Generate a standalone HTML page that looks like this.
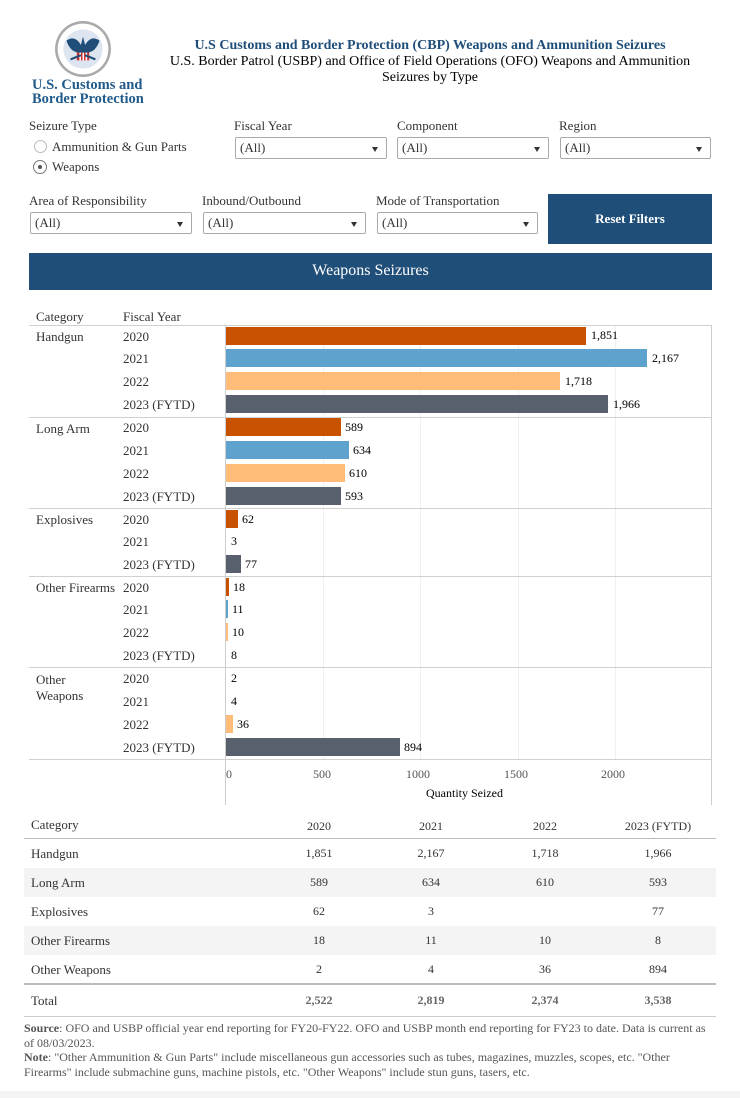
<!DOCTYPE html>
<html><head><meta charset="utf-8"><style>
*{margin:0;padding:0;box-sizing:border-box}
body{width:740px;height:1098px;background:#fff;font-family:"Liberation Serif",serif;color:#333;position:relative;overflow:hidden;font-size:12px}
.a{position:absolute;white-space:nowrap}
.sel{position:absolute;height:22px;border:1px solid #aaa;border-radius:2px;font-size:13px;padding:2px 4px;color:#333}
.sel:after{content:"";position:absolute;right:8px;top:9px;border-left:3.5px solid transparent;border-right:3.5px solid transparent;border-top:5px solid #333}
.lbl{font-size:13px;color:#333}
.bar{position:absolute;height:18px}
.o{background:#c85200}.b{background:#5fa2ce}.p{background:#ffbc79}.g{background:#57606c}
.v{position:absolute;font-size:12px;color:#000}
.t{font-size:12px;color:#555}
.hl{position:absolute;height:1px;background:#d0d0d0}
.c{position:absolute;width:80px;text-align:center;font-size:12px;color:#333}
</style></head><body>
<!-- logo -->
<svg class="a" style="left:54px;top:20px" width="58" height="58" viewBox="0 0 56 56">
<circle cx="28" cy="28" r="27" fill="#aaa"/><circle cx="28" cy="28" r="24.5" fill="#fff"/><circle cx="28" cy="28" r="19" fill="#dde6f0"/>
<path d="M12 20 Q20 14 26 24 L28 16 L30 24 Q36 14 44 20 Q40 31 33 31 L23 31 Q16 31 12 20Z" fill="#1f4e79"/>
<rect x="22" y="28" width="12" height="11" fill="#c33"/><rect x="22" y="28" width="12" height="3.5" fill="#1f4e79"/>
<rect x="24.5" y="31.5" width="1.5" height="7.5" fill="#fff"/><rect x="27.5" y="31.5" width="1.5" height="7.5" fill="#fff"/><rect x="30.5" y="31.5" width="1.5" height="7.5" fill="#fff"/>
<path d="M16 38 L26 34 M40 38 L30 34" stroke="#1f4e79" stroke-width="2"/>
</svg>
<div class="a" style="left:32px;top:79px;font-size:14.5px;line-height:13.5px;color:#1f5a8a;font-weight:bold;font-family:'Liberation Serif',serif">U.S. Customs and<br>Border Protection</div>
<div class="a" style="left:150px;top:38px;width:560px;text-align:center;font-size:14px;line-height:16px;color:#000">
<b style="color:#1f4e79">U.S Customs and Border Protection (CBP) Weapons and Ammunition Seizures</b><br>U.S. Border Patrol (USBP) and Office of Field Operations (OFO) Weapons and Ammunition<br>Seizures by Type</div>
<!-- filters -->
<div class="a lbl" style="left:29px;top:118px">Seizure Type</div>
<div class="a" style="left:34px;top:140px;width:13px;height:13px;border:1px solid #bbb;border-radius:50%"></div>
<div class="a lbl" style="left:52px;top:139px">Ammunition &amp; Gun Parts</div>
<div class="a" style="left:33px;top:160px;width:14px;height:14px;border:1px solid #777;border-radius:50%"></div>
<div class="a" style="left:38px;top:165px;width:4px;height:4px;background:#555;border-radius:50%"></div>
<div class="a lbl" style="left:52px;top:159px">Weapons</div>
<div class="a lbl" style="left:234px;top:118px">Fiscal Year</div>
<div class="sel" style="left:235px;top:137px;width:152px">(All)</div>
<div class="a lbl" style="left:397px;top:118px">Component</div>
<div class="sel" style="left:397px;top:137px;width:152px">(All)</div>
<div class="a lbl" style="left:559px;top:118px">Region</div>
<div class="sel" style="left:560px;top:137px;width:151px">(All)</div>
<div class="a lbl" style="left:29px;top:193px">Area of Responsibility</div>
<div class="sel" style="left:30px;top:212px;width:162px">(All)</div>
<div class="a lbl" style="left:202px;top:193px">Inbound/Outbound</div>
<div class="sel" style="left:203px;top:212px;width:163px">(All)</div>
<div class="a lbl" style="left:376px;top:193px">Mode of Transportation</div>
<div class="sel" style="left:377px;top:212px;width:161px">(All)</div>
<div class="a" style="left:548px;top:194px;width:164px;height:50px;background:#1f4e79;color:#fff;font-weight:bold;font-size:13px;text-align:center;line-height:50px">Reset Filters</div>
<div class="a" style="left:29px;top:253px;width:683px;height:37px;background:#1f4e79;color:#fff;font-size:16px;text-align:center;line-height:36px">Weapons Seizures</div>
<!-- chart -->
<div class="a lbl" style="left:36px;top:309px">Category</div>
<div class="a lbl" style="left:123px;top:309px">Fiscal Year</div>
<div class="hl" style="left:29px;top:325px;width:683px"></div>
<div class="a" style="left:225px;top:325px;width:1px;height:480px;background:#ccc"></div>
<div class="a" style="left:711px;top:325px;width:1px;height:480px;background:#ccc"></div>
<div class="a" style="left:323px;top:326px;width:1px;height:433px;background:#f0f0f0"></div>
<div class="a" style="left:420px;top:326px;width:1px;height:433px;background:#f0f0f0"></div>
<div class="a" style="left:518px;top:326px;width:1px;height:433px;background:#f0f0f0"></div>
<div class="a" style="left:615px;top:326px;width:1px;height:433px;background:#f0f0f0"></div>
<div class="hl" style="left:29px;top:417px;width:683px"></div>
<div class="hl" style="left:29px;top:508px;width:683px"></div>
<div class="hl" style="left:29px;top:576px;width:683px"></div>
<div class="hl" style="left:29px;top:667px;width:683px"></div>
<div class="hl" style="left:29px;top:759px;width:683px"></div>
<div class="a lbl" style="left:36px;top:329px">Handgun</div>
<div class="a lbl" style="left:36px;top:421px">Long Arm</div>
<div class="a lbl" style="left:36px;top:512px">Explosives</div>
<div class="a lbl" style="left:36px;top:580px">Other Firearms</div>
<div class="a lbl" style="left:36px;top:672px;line-height:16px">Other<br>Weapons</div>
<!-- rows -->
<div class="a lbl" style="left:123px;top:329px">2020</div><div class="bar o" style="left:226px;top:327px;width:360px"></div><div class="v" style="left:591px;top:328px">1,851</div>
<div class="a lbl" style="left:123px;top:351px">2021</div><div class="bar b" style="left:226px;top:349px;width:421px"></div><div class="v" style="left:652px;top:351px">2,167</div>
<div class="a lbl" style="left:123px;top:374px">2022</div><div class="bar p" style="left:226px;top:372px;width:334px"></div><div class="v" style="left:565px;top:374px">1,718</div>
<div class="a lbl" style="left:123px;top:397px">2023 (FYTD)</div><div class="bar g" style="left:226px;top:395px;width:382px"></div><div class="v" style="left:613px;top:397px">1,966</div>

<div class="a lbl" style="left:123px;top:420px">2020</div><div class="bar o" style="left:226px;top:418px;width:115px"></div><div class="v" style="left:345px;top:420px">589</div>
<div class="a lbl" style="left:123px;top:443px">2021</div><div class="bar b" style="left:226px;top:441px;width:123px"></div><div class="v" style="left:353px;top:443px">634</div>
<div class="a lbl" style="left:123px;top:466px">2022</div><div class="bar p" style="left:226px;top:464px;width:119px"></div><div class="v" style="left:349px;top:466px">610</div>
<div class="a lbl" style="left:123px;top:489px">2023 (FYTD)</div><div class="bar g" style="left:226px;top:487px;width:115px"></div><div class="v" style="left:345px;top:489px">593</div>

<div class="a lbl" style="left:123px;top:512px">2020</div><div class="bar o" style="left:226px;top:510px;width:12px"></div><div class="v" style="left:242px;top:512px">62</div>
<div class="a lbl" style="left:123px;top:534px">2021</div><div class="v" style="left:231px;top:534px">3</div>
<div class="a lbl" style="left:123px;top:557px">2023 (FYTD)</div><div class="bar g" style="left:226px;top:555px;width:15px"></div><div class="v" style="left:245px;top:557px">77</div>

<div class="a lbl" style="left:123px;top:580px">2020</div><div class="bar o" style="left:226px;top:578px;width:3px"></div><div class="v" style="left:233px;top:580px">18</div>
<div class="a lbl" style="left:123px;top:602px">2021</div><div class="bar b" style="left:226px;top:600px;width:2px"></div><div class="v" style="left:232px;top:602px">11</div>
<div class="a lbl" style="left:123px;top:625px">2022</div><div class="bar p" style="left:226px;top:623px;width:2px"></div><div class="v" style="left:232px;top:625px">10</div>
<div class="a lbl" style="left:123px;top:648px">2023 (FYTD)</div><div class="v" style="left:231px;top:648px">8</div>

<div class="a lbl" style="left:123px;top:671px">2020</div><div class="v" style="left:231px;top:671px">2</div>
<div class="a lbl" style="left:123px;top:694px">2021</div><div class="v" style="left:231px;top:694px">4</div>
<div class="a lbl" style="left:123px;top:717px">2022</div><div class="bar p" style="left:226px;top:715px;width:7px"></div><div class="v" style="left:237px;top:717px">36</div>
<div class="a lbl" style="left:123px;top:740px">2023 (FYTD)</div><div class="bar g" style="left:226px;top:738px;width:174px"></div><div class="v" style="left:404px;top:740px">894</div>

<div class="a t" style="left:226px;top:767px">0</div>
<div class="a t" style="left:313px;top:767px">500</div>
<div class="a t" style="left:406px;top:767px">1000</div>
<div class="a t" style="left:504px;top:767px">1500</div>
<div class="a t" style="left:601px;top:767px">2000</div>
<div class="a" style="left:426px;top:786px;font-size:12px;color:#000">Quantity Seized</div>
<!-- table -->
<div class="a lbl" style="left:31px;top:817px">Category</div>
<div class="c" style="left:279px;top:819px">2020</div><div class="c" style="left:391px;top:819px">2021</div><div class="c" style="left:505px;top:819px">2022</div><div class="c" style="left:618px;top:819px">2023 (FYTD)</div>
<div class="hl" style="left:24px;top:838px;width:692px;background:#bbb"></div>
<div class="a" style="left:24px;top:868px;width:692px;height:29px;background:#f4f4f4"></div>
<div class="a" style="left:24px;top:926px;width:692px;height:29px;background:#f4f4f4"></div>
<div class="a lbl" style="left:31px;top:846px">Handgun</div><div class="c" style="left:279px;top:846px">1,851</div><div class="c" style="left:391px;top:846px">2,167</div><div class="c" style="left:505px;top:846px">1,718</div><div class="c" style="left:618px;top:846px">1,966</div>
<div class="a lbl" style="left:31px;top:875px">Long Arm</div><div class="c" style="left:279px;top:875px">589</div><div class="c" style="left:391px;top:875px">634</div><div class="c" style="left:505px;top:875px">610</div><div class="c" style="left:618px;top:875px">593</div>
<div class="a lbl" style="left:31px;top:904px">Explosives</div><div class="c" style="left:279px;top:904px">62</div><div class="c" style="left:391px;top:904px">3</div><div class="c" style="left:618px;top:904px">77</div>
<div class="a lbl" style="left:31px;top:933px">Other Firearms</div><div class="c" style="left:279px;top:933px">18</div><div class="c" style="left:391px;top:933px">11</div><div class="c" style="left:505px;top:933px">10</div><div class="c" style="left:618px;top:933px">8</div>
<div class="a lbl" style="left:31px;top:962px">Other Weapons</div><div class="c" style="left:279px;top:962px">2</div><div class="c" style="left:391px;top:962px">4</div><div class="c" style="left:505px;top:962px">36</div><div class="c" style="left:618px;top:962px">894</div>
<div class="a" style="left:24px;top:983px;width:692px;height:2px;background:#bbb"></div>
<div class="a lbl" style="left:31px;top:993px">Total</div>
<div class="c" style="left:279px;top:993px;color:#666;font-weight:bold">2,522</div><div class="c" style="left:391px;top:993px;color:#666;font-weight:bold">2,819</div><div class="c" style="left:505px;top:993px;color:#666;font-weight:bold">2,374</div><div class="c" style="left:618px;top:993px;color:#666;font-weight:bold">3,538</div>
<div class="hl" style="left:24px;top:1016px;width:692px;background:#ccc"></div>
<div class="a" style="left:24px;top:1021px;width:690px;white-space:normal;font-size:12px;line-height:14.5px;color:#555"><b>Source</b>: OFO and USBP official year end reporting for FY20-FY22. OFO and USBP month end reporting for FY23 to date. Data is current as of 08/03/2023.<br><b>Note</b>: "Other Ammunition &amp; Gun Parts" include miscellaneous gun accessories such as tubes, magazines, muzzles, scopes, etc. "Other Firearms" include submachine guns, machine pistols, etc. "Other Weapons" include stun guns, tasers, etc.</div>
<div class="a" style="left:0;top:1091px;width:740px;height:7px;background:#f4f4f4"></div>
</body></html>
